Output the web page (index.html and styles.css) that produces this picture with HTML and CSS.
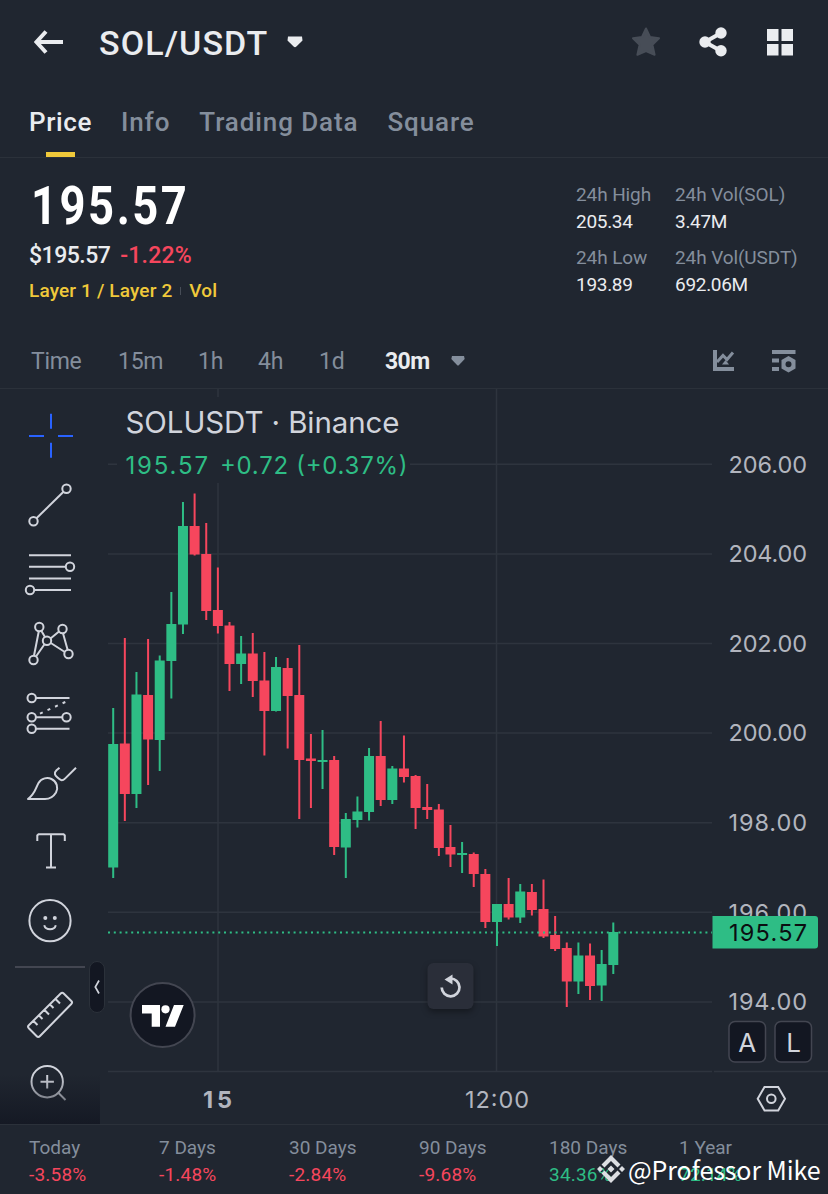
FILE: index.html
```html
<!DOCTYPE html>
<html lang="en">
<head>
    <meta charset="UTF-8">
    <title>SOL/USDT</title>
    <link rel="stylesheet" href="styles.css">
</head>
<body>
    <div class="app">
        <header class="header">
            <svg class="back" width="30" height="24" viewBox="0 0 30 24">
                <path d="M12 1.500 2.500 12 12 22.500M2.500 12H29" fill="none" stroke="#eaecef" stroke-width="4"/>
            </svg>
            <h1 class="pair">SOL/USDT</h1>
            <svg class="pair-caret" width="16" height="12" viewBox="0 0 16 12">
                <path d="M1 .5h14l.5 4L9.400 10.600Q8 12 6.600 10.600L.5 4.500z" fill="#eaecef"/>
            </svg>
            <div class="actions">
                <svg width="30" height="30" viewBox="0 0 30 30">
                    <path d="M15 1.500 19 10l9 1.300-6.600 6.500 2.200 10L15 24l-8.600 3.800 2.200-10L2 11.300 11 10z" fill="#474d57" stroke="#474d57" stroke-width="2" stroke-linejoin="round"/>
                </svg>
                <svg width="30" height="30" viewBox="0 0 30 30">
                    <path d="M23 6 7 15l16 9" fill="none" stroke="#eaecef" stroke-width="4"/>
                    <g fill="#eaecef"><circle cx="23" cy="6" r="5.700"/><circle cx="7" cy="15" r="5.700"/><circle cx="23" cy="23.700" r="5.700"/></g>
                </svg>
                <svg width="26" height="27" viewBox="0 0 26 27">
                    <path d="M0 0h11.500v12H0zM14.500 0H26v12H14.500zM0 15h11.500v11.500H0zM14.500 15H26v11.500H14.500z" fill="#eaecef"/>
                </svg>
            </div>
        </header>

        <nav class="tabs">
            <a class="tab active">Price</a>
            <a class="tab">Info</a>
            <a class="tab">Trading Data</a>
            <a class="tab">Square</a>
        </nav>

        <section class="summary">
            <div class="quote">
                <div class="last-price">195.57</div>
                <div class="fiat"><span>$195.57</span><span class="change down">-1.22%</span></div>
                <div class="tags"><span>Layer 1 / Layer 2</span><i></i><span>Vol</span></div>
            </div>
            <dl class="stats">
                <div><dt>24h High</dt><dd>205.34</dd></div>
                <div><dt>24h Vol(SOL)</dt><dd>3.47M</dd></div>
                <div><dt>24h Low</dt><dd>193.89</dd></div>
                <div><dt>24h Vol(USDT)</dt><dd>692.06M</dd></div>
            </dl>
        </section>

        <div class="intervals">
            <div class="interval-list">
                <span>Time</span>
                <span>15m</span>
                <span>1h</span>
                <span>4h</span>
                <span>1d</span>
                <span class="active">30m</span>
                <svg width="14" height="10" viewBox="0 0 14 10"><path d="M1 0h12l.7 3L8 9Q7 10 6 9L.3 3z" fill="#848e9c"/></svg>
            </div>
            <div class="interval-icons">
                <svg width="22" height="22" viewBox="0 0 22 22">
                    <path d="M2 0v19h19" fill="none" stroke="#848e9c" stroke-width="4"/>
                    <path d="m4 12 6-6.500 4 4L20 2.500" fill="none" stroke="#848e9c" stroke-width="3"/>
                    <path d="m12.500 10 3.500 4.500H9z" fill="#848e9c"/>
                </svg>
                <svg width="24" height="23" viewBox="0 0 24 23">
                    <path d="M0 0h23.500v4H0zM0 8.500h7v4H0zM0 17h7v4H0z" fill="#848e9c"/>
                    <path d="m16.500 6 7 4v8.500l-7 4-7-4V10zm0 5.300a3 3 0 1 0 0 6 3 3 0 0 0 0-6z" fill="#848e9c" fill-rule="evenodd"/>
                </svg>
            </div>
        </div>

        <main class="workspace">
            <aside class="toolbar">
                <svg class="tool cross" viewBox="0 0 100 69.5"><path d="M51 12.700v15M51 41.700v15M29 35h15M58 35h15"/></svg>
                <svg class="tool" viewBox="0 0 100 69.5"><path d="M36.500 47.300 63.500 20.700"/><circle cx="66.500" cy="17.700" r="4.200"/><circle cx="33.500" cy="50.300" r="4.200"/></svg>
                <svg class="tool" viewBox="0 0 100 69.5"><path d="M29 15.300h42M29 26.800h37M29 38.400h42M34 50h37"/><circle cx="70" cy="26.800" r="4.200"/><circle cx="30" cy="50" r="4.200"/></svg>
                <svg class="tool" viewBox="0 0 100 69.5"><path d="M38.800 21.200 34 45.800M36 46.500l8.500-12.300M50.500 28.500l8.500-7M63 23.200l4.600 16.600M64.800 42l-14-9M45 27l-3.700-6.300"/><circle cx="39.300" cy="17" r="4.200"/><circle cx="62.500" cy="19" r="4.200"/><circle cx="47" cy="30.700" r="4.200"/><circle cx="68.500" cy="44" r="4.200"/><circle cx="33.500" cy="50" r="4.200"/></svg>
                <svg class="tool" viewBox="0 0 100 69.5"><path d="M36 19h33.500M36 38.200h26M36 49.800h33.500"/><path d="m40 34.700 27-12.500" stroke-dasharray="3 5.300"/><circle cx="31.700" cy="19" r="4.200"/><circle cx="31.700" cy="38.200" r="4.200"/><circle cx="66.500" cy="38.200" r="4.200"/><circle cx="31.700" cy="49.800" r="4.200"/></svg>
                <svg class="tool" viewBox="0 0 100 69.5"><path d="M28 50c7-5 7.500-10.500 10.500-16 3-5 9-6 13-4 5.500 2.500 7 9 4.500 13.500C53 48.500 49 50 45 50zM59.500 18.800l-3 2.500c-3 3-1.500 5 1 7.300 2.500 2.400 4.500 3.900 7.500 1L76 18.800"/></svg>
                <svg class="tool" viewBox="0 0 100 69.5"><path d="M37.300 23v-5.500l1-1.200h25.500l1 1.200V23M51 16.300v33M46 49.500h10"/></svg>
                <svg class="tool" viewBox="0 0 100 69.5"><circle cx="50" cy="32.700" r="20.600"/><path d="M44.200 37.300c1.500 5.300 10.200 5.300 11.600 0"/><g class="solid"><circle cx="45.300" cy="30" r="2"/><circle cx="54.800" cy="30" r="2"/></g></svg>
                <hr>
                <svg class="tool" viewBox="0 0 100 69.5"><path d="M60.700 13.500q1.500-1.500 3 0l7.600 7.500q1.500 1.500 0 3L40 56q-1.800 1.800-3.500 0L28.800 48.300q-1.500-1.500 0-3zM33.500 41l4 4M39 35.500l3.500 3.500M44.500 30l4.500 4.500M50 24.500l3.500 3.500M55.500 19l4.500 4.500"/></svg>
                <svg class="tool" viewBox="0 0 100 69.5"><circle cx="47.200" cy="31.700" r="15.700"/><path d="M47.200 25v13.400M40.500 31.700h13.400M58.500 43l7 7"/></svg>
                <div class="collapse"><svg width="6" height="14" viewBox="0 0 6 14"><path d="M5 .5 1.300 7 5 13.500" fill="none" stroke="#d1d4dc" stroke-width="1.700"/></svg></div>
            </aside>

            <svg class="chart" width="728" height="735" viewBox="100 389 728 735">
                <g id="grid" class="grid">
                    <path d="M218 389v682M496.500 389v682M108 1071.500h604M714 1071.500h114"/>
                </g>
                <rect x="117" y="397" width="293" height="86" fill="#202630"/>
                <g id="candles"></g>
                <path class="price-line" d="M108 932.500H712"/>
                <text class="symbol" x="125.500" y="432.500" textLength="274">SOLUSDT · Binance</text>
                <text class="quote-line" x="125.500" y="474" textLength="82.500">195.57</text>
                <text class="quote-line" x="220" y="474" textLength="187.500">+0.72 (+0.37%)</text>
                <g id="axis" class="axis"></g>
                <path d="M712.500 916h102.500q3 0 3 3v26.500q0 3-3 3H712.500z" fill="#2ebd85"/>
                <text class="axis-current" x="729" y="941" textLength="78">195.57</text>
                <g class="axis">
                    <text class="bold" x="203" y="1107.500" textLength="29">15</text>
                    <text x="465" y="1107.500" textLength="64">12:00</text>
                </g>

                <g class="mode">
                    <rect x="729" y="1021.500" width="36.500" height="40.500" rx="6"/>
                    <rect x="775" y="1021.500" width="36.500" height="40.500" rx="6"/>
                    <text x="747.300" y="1051.500">A</text>
                    <text x="793.500" y="1051.500">L</text>
                </g>
                <g fill="none" stroke="#d1d4dc" stroke-width="2">
                    <path d="M764.500 1087h13.700l6.800 11.700-6.800 11.700h-13.700l-6.800-11.700z"/>
                    <circle cx="771.300" cy="1098.700" r="4.300"/>
                </g>

                <circle cx="162.600" cy="1015" r="32" fill="#131722" stroke="#434651" stroke-width="2"/>
                <path d="M142 1005h18v21.700h-8.300v-13.200H142zM174 1005h9.700l-8.700 21.700h-9.500z" fill="#fff"/>
                <circle cx="165.500" cy="1009.300" r="4.100" fill="#fff"/>

                <rect class="reset" x="427.500" y="963" width="46" height="46" rx="6"/>
                <path d="M441.700 987.500a8.900 8.900 0 1 0 8.600-9" fill="none" stroke="#d1d4dc" stroke-width="2.700"/>
                <path d="m444.500 979.500 8-5v10z" fill="#d1d4dc"/>
            </svg>
        </main>

        <footer class="performance">
            <div><span>Today</span><b class="down">-3.58%</b></div>
            <div><span>7 Days</span><b class="down">-1.48%</b></div>
            <div><span>30 Days</span><b class="down">-2.84%</b></div>
            <div><span>90 Days</span><b class="down">-9.68%</b></div>
            <div><span>180 Days</span><b class="up">34.36%</b></div>
            <div><span>1 Year</span><b class="up">72.14%</b></div>
        </footer>

        <div class="watermark">
            <svg width="28" height="28" viewBox="-14 -14 28 28">
                <path d="M-8-3 0-11 8-3M-8 3 0 11 8 3" fill="none" stroke="#dcdee2" stroke-width="4.200"/>
                <path d="M0-3.500 3.500 0 0 3.500-3.500 0zM-11-3l3 3-3 3-3-3zM11-3l3 3-3 3-3-3z" fill="#dcdee2"/>
            </svg>
            <span>@Professor Mike</span>
        </div>
    </div>

    <script>
        // direction, body top, body bottom, high, low (chart units)
        const candles = [
            ['up', 744, 867.5, 708, 878], ['down', 743.5, 794, 638, 821], ['up', 694.5, 794, 672, 808],
            ['down', 695, 739.5, 639, 785], ['up', 660.5, 740, 655.5, 771], ['up', 624, 661, 592, 698.5],
            ['up', 526, 624.5, 502, 634], ['down', 526, 554.5, 493.5, 555.5], ['down', 554, 611, 523, 620],
            ['down', 610, 626, 567.5, 633.5], ['down', 625.5, 664, 622, 691], ['up', 653.5, 664, 636, 684],
            ['down', 653.5, 681, 633, 697], ['down', 680.5, 711, 652, 755.5], ['up', 667, 711, 657, 711.5],
            ['down', 668, 696, 658, 748.5], ['down', 695, 760, 645, 819], ['down', 758.5, 761, 734, 808],
            ['up', 760, 762, 730, 789], ['down', 760, 847, 756, 855], ['up', 819, 847.5, 813, 878],
            ['up', 811.5, 820, 796.5, 827.5], ['up', 756, 812, 748, 820.5], ['down', 756, 800, 721, 806],
            ['up', 768.5, 800, 766, 804], ['down', 768.5, 777, 735.5, 782.5], ['down', 776, 808, 775, 829],
            ['down', 807, 810, 784, 819], ['down', 809.5, 848, 804, 856], ['down', 847, 854.5, 825, 867],
            ['up', 853, 855, 842, 873], ['down', 854, 874, 852.5, 887], ['down', 874, 922, 869, 928],
            ['up', 904, 922, 904, 946], ['down', 904, 917.5, 878, 919.5], ['up', 891.5, 917.5, 884, 923],
            ['down', 892, 910, 884, 915.5], ['down', 909, 936.5, 879.5, 938], ['down', 935, 949, 916, 951],
            ['down', 948, 981.5, 942.5, 1007], ['up', 955.5, 981.5, 942.5, 994], ['down', 955.5, 986, 943.5, 1000],
            ['up', 964, 985.5, 950, 1001], ['up', 932, 965, 922.5, 974]
        ];

        const ns = 'http://www.w3.org/2000/svg';

        function add(parent, tag, attrs) {
            const el = document.createElementNS(ns, tag);
            for (const key in attrs) {
                el.setAttribute(key, attrs[key]);
            }
            document.getElementById(parent).appendChild(el);
            return el;
        }

        candles.forEach(([dir, top, bottom, high, low], i) => {
            const x = 113.2 + i * 11.63;
            add('candles', 'rect', { class: dir, x: x - 1, y: high, width: 2, height: low - high });
            add('candles', 'rect', { class: dir, x: x - 5, y: top, width: 10, height: bottom - top });
        });

        // Price scale, one line every 2 USDT
        for (let price = 206; price >= 194; price -= 2) {
            const y = 464.3 + (206 - price) * 44.8;
            add('grid', 'path', { d: `M108 ${y}H712` });
            add('axis', 'text', { x: 728.5, y: y + 8.2, textLength: 78.5 }).textContent = price.toFixed(2);
        }
    </script>
</body>
</html>
```

FILE: styles.css
```css
* {
    box-sizing: border-box;
}

body {
    margin: 0;
    background: #202630;
    color: #eaecef;
    font-family: Roboto, "Liberation Sans", sans-serif;
}

svg {
    display: block;
    flex-shrink: 0;
}

.app {
    position: relative;
    width: 828px;
    height: 1194px;
    overflow: hidden;
}

.up { color: #2ebd85; fill: #2ebd85; }
.down { color: #f6465d; fill: #f6465d; }

.header {
    display: flex;
    align-items: center;
    height: 84px;
    padding: 0 35px 0 34px;
}

.pair {
    width: 188px;
    margin: 2px 0 0 35px;
    font-size: 34px;
    font-weight: 500;
    letter-spacing: 1.1px;
}

.actions {
    display: flex;
    align-items: center;
    gap: 38px;
    margin-left: auto;
}

.actions svg:nth-child(2) {
    margin: 0 1px 0 -1px;
}

.tabs {
    display: flex;
    gap: 29px;
    height: 74px;
    padding: 0 29px;
    border-bottom: 1px solid #2b313a;
}

.tab {
    display: flex;
    flex-direction: column;
    align-items: center;
    justify-content: space-between;
    padding-top: 20px;
    color: #848e9c;
    font-size: 26px;
    font-weight: 500;
    line-height: 36px;
    letter-spacing: 0.9px;
}

.tab.active {
    color: #eaecef;
    letter-spacing: 0.6px;
}

.tab.active::after {
    content: "";
    width: 29px;
    height: 5px;
    background: #f0c93a;
}

.summary {
    display: flex;
    justify-content: space-between;
    height: 176px;
    padding: 18px 29px 0;
}

.last-price {
    margin-left: 2px;
    color: #fff;
    font-size: 54px;
    font-weight: 700;
    line-height: 60px;
    letter-spacing: 3px;
    transform: scaleX(0.84);
    transform-origin: left;
}

.fiat {
    display: flex;
    gap: 10px;
    margin-top: 4px;
    font-size: 23px;
    font-weight: 500;
    line-height: 32px;
    letter-spacing: -0.5px;
}

.change {
    letter-spacing: 0.2px;
}

.tags {
    display: flex;
    align-items: center;
    gap: 8px;
    margin-top: 6px;
    color: #f0c93a;
    font-size: 19px;
    font-weight: 500;
    line-height: 26px;
    letter-spacing: 0.15px;
}

.tags i {
    width: 1px;
    height: 8px;
    background: #474d57;
}

.stats {
    display: grid;
    grid-template-columns: 99px 124px;
    grid-auto-rows: 63px;
    margin: 5px 0 0;
    font-size: 19px;
    line-height: 27px;
}

.stats dt {
    color: #848e9c;
    letter-spacing: -0.1px;
    white-space: nowrap;
}

.stats dd {
    margin: 0;
    letter-spacing: -0.3px;
}

.intervals {
    display: flex;
    align-items: center;
    height: 55px;
    padding: 0 32px 0 31px;
    border-bottom: 1px solid #2b313a;
    color: #848e9c;
    font-size: 23px;
}

.interval-list {
    display: grid;
    grid-template-columns: 87px 80px 60px 61px 66px 66px 14px;
    align-items: center;
    letter-spacing: -0.3px;
}

.interval-list .active {
    color: #eaecef;
    font-weight: 700;
    letter-spacing: -0.6px;
}

.interval-icons {
    display: flex;
    gap: 37px;
    margin-left: auto;
}

.workspace {
    display: flex;
    height: 735px;
}

.toolbar {
    position: relative;
    width: 100px;
    padding-top: 12.25px;
}

.toolbar::after {
    content: "";
    position: absolute;
    left: 0;
    bottom: 0;
    width: 100px;
    height: 50px;
    background: linear-gradient(rgba(19, 23, 34, 0), rgba(19, 23, 34, 0.85));
}

.toolbar hr {
    width: 70px;
    height: 2px;
    margin: 9px 0 12px 15px;
    border: 0;
    background: #434651;
}

.tool {
    width: 100px;
    height: 69.5px;
    fill: none;
    stroke: #d1d4dc;
    stroke-width: 2;
    stroke-linejoin: round;
}

.tool.cross {
    stroke: #2962ff;
}

.tool .solid {
    fill: #d1d4dc;
    stroke: none;
}

.collapse {
    position: absolute;
    z-index: 1;
    top: 572px;
    left: 89px;
    display: flex;
    align-items: center;
    justify-content: center;
    width: 16px;
    height: 52px;
    border: 1px solid #2b313a;
    border-radius: 8px;
    background: #131722;
}

.chart {
    font-family: Inter, "Liberation Sans", sans-serif;
}

.grid {
    stroke: #2e343e;
    stroke-width: 1.5;
}

.price-line {
    stroke: #2ebd85;
    stroke-width: 2;
    stroke-dasharray: 2 3.8;
}

.symbol {
    fill: #d1d4dc;
    font-size: 29.5px;
}

.quote-line {
    fill: #2ebd85;
    font-size: 24px;
}

.axis {
    fill: #b2b5be;
    font-size: 23.5px;
}

.axis .bold {
    font-weight: 700;
}

.axis-current {
    fill: #0b0e11;
    font-size: 23.5px;
}

.mode rect {
    fill: #131722;
    stroke: #434651;
    stroke-width: 1.5;
}

.mode text {
    fill: #d1d4dc;
    font-size: 26px;
    text-anchor: middle;
}

.reset {
    fill: #2a2e39;
    filter: drop-shadow(0 3px 3px rgba(0, 0, 0, 0.35));
}

.performance {
    display: grid;
    grid-template-columns: repeat(6, 130px);
    height: 70px;
    padding: 9px 0 0 29px;
    border-top: 1px solid #2b313a;
    font-size: 19px;
    line-height: 27px;
}

.performance span {
    display: block;
    color: #848e9c;
}

.performance b {
    font-weight: 400;
    letter-spacing: 0.2px;
}

.watermark {
    position: absolute;
    left: 597px;
    bottom: 5px;
    display: flex;
    align-items: center;
    gap: 3px;
    color: #fff;
    font-family: "Noto Sans CJK SC", sans-serif;
    font-size: 25px;
    line-height: 40px;
    letter-spacing: -0.1px;
    white-space: nowrap;
}
```
